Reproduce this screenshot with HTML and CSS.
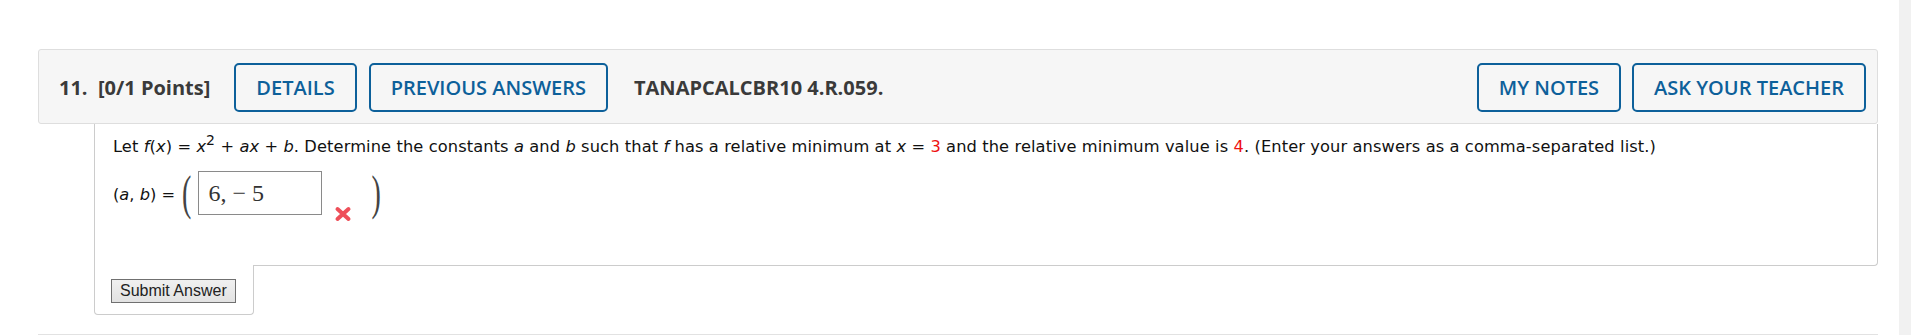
FILE: index.html
```html
<!DOCTYPE html>
<html lang="en">
<head>
<meta charset="utf-8">
<title>Question 11</title>
<link rel="stylesheet" href="styles.css">
</head>
<body>
<div class="layout">
  <main class="main">
    <section class="question">
      <div class="q-header">
        <span class="q-label">11.&nbsp; [0/1 Points]</span>
        <button class="btn-outline">DETAILS</button>
        <button class="btn-outline">PREVIOUS ANSWERS</button>
        <span class="q-code">TANAPCALCBR10 4.R.059.</span>
        <div class="q-actions">
          <button class="btn-outline">MY NOTES</button>
          <button class="btn-outline">ASK YOUR TEACHER</button>
        </div>
      </div>
      <div class="q-body">
        <p class="q-text">Let <i>f</i>(<i>x</i>) = <i>x</i><sup>2</sup> + <i>ax</i> + <i>b</i>. Determine the constants <i>a</i> and <i>b</i> such that <i>f</i> has a relative minimum at <i>x</i> = <span class="red">3</span> and the relative minimum value is <span class="red">4</span>. (Enter your answers as a comma-separated list.)</p>
        <div class="answer-row">
          <span class="answer-label">(<i>a</i>, <i>b</i>) =</span>
          <span class="paren">(</span>
          <span class="answer-box">6, − 5</span>
          <svg class="wrong" width="18" height="16" viewBox="0 0 18 16" aria-label="incorrect">
            <path d="M3.5 3 L14.5 13 M14.5 3 L3.5 13" stroke="#ee4f59" stroke-width="4" stroke-linecap="round" fill="none"/>
          </svg>
          <span class="paren paren-right">)</span>
        </div>
      </div>
      <div class="submit-tab">
        <button class="submit">Submit Answer</button>
      </div>
    </section>
    <div class="sep"></div>
  </main>
  <div class="scroll-strip"></div>
</div>
</body>
</html>
```

FILE: styles.css
```css
* { box-sizing: border-box; }

html, body {
  margin: 0;
  padding: 0;
  background: #ffffff;
  height: 100%;
}

.layout {
  display: flex;
  min-height: 335px;
  height: 100%;
}

.main {
  flex: 1;
  padding: 49px 21px 0 38px;
}

.scroll-strip {
  width: 12px;
  background: #f1f1f1;
}

.q-header {
  display: flex;
  align-items: center;
  background: #f6f6f6;
  border: 1px solid #dedede;
  border-radius: 3px;
  padding: 13px 11px 11px 20px;
  font-family: "Open Sans", "Liberation Sans", sans-serif;
  font-size: 20px;
  color: #3a3a3a;
}

.q-label {
  font-weight: 700;
  margin-right: 24px;
  white-space: pre;
}

.q-code {
  font-weight: 700;
  margin-left: 14px;
}

.btn-outline {
  height: 49px;
  padding: 0 20px;
  border: 2px solid #0d609a;
  border-radius: 5px;
  background: #f6f6f6;
  color: #0d609a;
  font-family: "Open Sans", "Liberation Sans", sans-serif;
  font-size: 20px;
  font-weight: 600;
  margin-right: 12px;
}

.q-actions {
  margin-left: auto;
  display: flex;
  gap: 11px;
}

.q-actions .btn-outline {
  margin-right: 0;
}

.q-body {
  margin-left: 56px;
  border: 1px solid #cccccc;
  border-top: none;
  border-radius: 0 0 4px 0;
  padding: 12px 18px 48px 18px;
  font-family: "DejaVu Sans", Verdana, sans-serif;
  font-size: 16.25px;
  color: #111111;
}

.q-text {
  margin: 0;
  line-height: 22px;
  letter-spacing: 0.1px;
}

.q-text sup {
  font-size: 14px;
  line-height: 0;
  vertical-align: 7px;
}

.red {
  color: #ee1111;
}

.answer-row {
  display: flex;
  align-items: center;
  margin-top: 11px;
  height: 48px;
}

.answer-label {
  margin-right: 7px;
  position: relative;
  top: 1px;
}

.paren {
  display: inline-block;
  font-family: "Liberation Serif", "DejaVu Serif", serif;
  font-size: 28px;
  line-height: 28px;
  color: #444444;
  transform: scaleY(1.75);
  margin-right: 7px;
}

.paren-right {
  margin-right: 0;
  margin-left: 19px;
}

.answer-box {
  width: 124px;
  height: 44px;
  border: 1px solid #8a8a8a;
  padding: 0 0 0 9px;
  display: flex;
  align-items: center;
  font-family: "Liberation Serif", "DejaVu Serif", serif;
  font-size: 24px;
  color: #333333;
  background: #ffffff;
}

.wrong {
  align-self: flex-end;
  margin: 0 0 -5px 12px;
}

.submit-tab {
  width: 160px;
  margin-left: 56px;
  margin-top: -1px;
  background: #ffffff;
  border: 1px solid #cccccc;
  border-top: none;
  border-radius: 0 0 4px 4px;
  padding: 14px 16px 11px 16px;
}

.submit {
  height: 24px;
  padding: 0 8px;
  border: 1px solid #707070;
  background: linear-gradient(#f0f0f0, #e2e2e2);
  font-family: "Liberation Sans", Arial, sans-serif;
  font-size: 16px;
  color: #222222;
  border-radius: 0;
  white-space: nowrap;
}

.sep {
  margin-top: 19px;
  border-top: 1px solid #e2e2e2;
}
```
